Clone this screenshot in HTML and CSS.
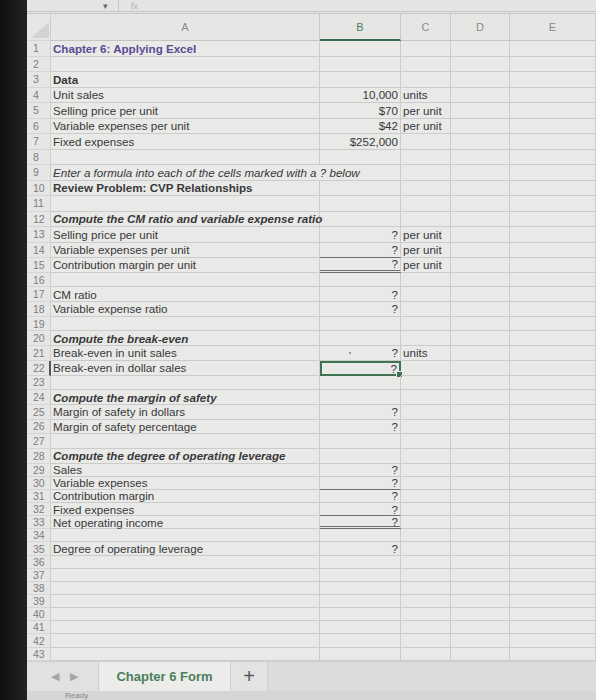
FILE: index.html
```
<!DOCTYPE html>
<html>
<head>
<meta charset="utf-8">
<link rel="stylesheet" href="styles.css">
</head>
<body>
<div class="screen">
  <div class="bezel"></div>
  <div class="app">
    <div class="fbar"><span class="caret">&#9662;</span><span class="fdiv"></span><span class="fx">fx</span></div>
    <div class="row head">
      <div class="rn corner"><span class="tri"></span></div>
      <div class="c a hc">A</div>
      <div class="c b hc selcol">B</div>
      <div class="c cc hc">C</div>
      <div class="c d hc">D</div>
      <div class="c e hc">E</div>
    </div>

    <div class="row h1"><div class="rn">1</div><div class="c a title">Chapter 6: Applying Excel</div><div class="c b"></div><div class="c cc"></div><div class="c d"></div><div class="c e"></div></div>
    <div class="row h1"><div class="rn">2</div><div class="c a"></div><div class="c b"></div><div class="c cc"></div><div class="c d"></div><div class="c e"></div></div>
    <div class="row h1"><div class="rn">3</div><div class="c a bold">Data</div><div class="c b"></div><div class="c cc"></div><div class="c d"></div><div class="c e"></div></div>
    <div class="row h1"><div class="rn">4</div><div class="c a">Unit sales</div><div class="c b num">10,000</div><div class="c cc">units</div><div class="c d"></div><div class="c e"></div></div>
    <div class="row h1"><div class="rn">5</div><div class="c a">Selling price per unit</div><div class="c b num">$70</div><div class="c cc">per unit</div><div class="c d"></div><div class="c e"></div></div>
    <div class="row h1"><div class="rn">6</div><div class="c a">Variable expenses per unit</div><div class="c b num">$42</div><div class="c cc">per unit</div><div class="c d"></div><div class="c e"></div></div>
    <div class="row h1"><div class="rn">7</div><div class="c a">Fixed expenses</div><div class="c b num">$252,000</div><div class="c cc"></div><div class="c d"></div><div class="c e"></div></div>
    <div class="row h1"><div class="rn">8</div><div class="c a"></div><div class="c b"></div><div class="c cc"></div><div class="c d"></div><div class="c e"></div></div>
    <div class="row h1"><div class="rn">9</div><div class="c a noright ital">Enter a formula into each of the cells marked with a ? below</div><div class="c b"></div><div class="c cc"></div><div class="c d"></div><div class="c e"></div></div>
    <div class="row h1"><div class="rn">10</div><div class="c a bold">Review Problem: CVP Relationships</div><div class="c b"></div><div class="c cc"></div><div class="c d"></div><div class="c e"></div></div>
    <div class="row h1"><div class="rn">11</div><div class="c a"></div><div class="c b"></div><div class="c cc"></div><div class="c d"></div><div class="c e"></div></div>
    <div class="row h1"><div class="rn">12</div><div class="c a bi">Compute the CM ratio and variable expense ratio</div><div class="c b"></div><div class="c cc"></div><div class="c d"></div><div class="c e"></div></div>
    <div class="row h1"><div class="rn">13</div><div class="c a">Selling price per unit</div><div class="c b num">?</div><div class="c cc">per unit</div><div class="c d"></div><div class="c e"></div></div>
    <div class="row h1"><div class="rn">14</div><div class="c a">Variable expenses per unit</div><div class="c b num ul">?</div><div class="c cc">per unit</div><div class="c d"></div><div class="c e"></div></div>

    <div class="row h2"><div class="rn">15</div><div class="c a">Contribution margin per unit</div><div class="c b num dul">?</div><div class="c cc">per unit</div><div class="c d"></div><div class="c e"></div></div>
    <div class="row h2"><div class="rn">16</div><div class="c a"></div><div class="c b"></div><div class="c cc"></div><div class="c d"></div><div class="c e"></div></div>
    <div class="row h2"><div class="rn">17</div><div class="c a">CM ratio</div><div class="c b num">?</div><div class="c cc"></div><div class="c d"></div><div class="c e"></div></div>
    <div class="row h2"><div class="rn">18</div><div class="c a">Variable expense ratio</div><div class="c b num">?</div><div class="c cc"></div><div class="c d"></div><div class="c e"></div></div>
    <div class="row h2"><div class="rn">19</div><div class="c a"></div><div class="c b"></div><div class="c cc"></div><div class="c d"></div><div class="c e"></div></div>
    <div class="row h2"><div class="rn">20</div><div class="c a bi">Compute the break-even</div><div class="c b"></div><div class="c cc"></div><div class="c d"></div><div class="c e"></div></div>
    <div class="row h2"><div class="rn">21</div><div class="c a">Break-even in unit sales</div><div class="c b num dot">?</div><div class="c cc">units</div><div class="c d"></div><div class="c e"></div></div>
    <div class="row h2"><div class="rn selrow">22</div><div class="c a">Break-even in dollar sales</div><div class="c b num sel">?<span class="handle"></span></div><div class="c cc"></div><div class="c d"></div><div class="c e"></div></div>
    <div class="row h2"><div class="rn">23</div><div class="c a"></div><div class="c b"></div><div class="c cc"></div><div class="c d"></div><div class="c e"></div></div>
    <div class="row h2"><div class="rn">24</div><div class="c a bi">Compute the margin of safety</div><div class="c b"></div><div class="c cc"></div><div class="c d"></div><div class="c e"></div></div>
    <div class="row h2"><div class="rn">25</div><div class="c a">Margin of safety in dollars</div><div class="c b num">?</div><div class="c cc"></div><div class="c d"></div><div class="c e"></div></div>
    <div class="row h2"><div class="rn">26</div><div class="c a">Margin of safety percentage</div><div class="c b num">?</div><div class="c cc"></div><div class="c d"></div><div class="c e"></div></div>
    <div class="row h2"><div class="rn">27</div><div class="c a"></div><div class="c b"></div><div class="c cc"></div><div class="c d"></div><div class="c e"></div></div>
    <div class="row h2"><div class="rn">28</div><div class="c a bi">Compute the degree of operating leverage</div><div class="c b"></div><div class="c cc"></div><div class="c d"></div><div class="c e"></div></div>

    <div class="row h3"><div class="rn">29</div><div class="c a">Sales</div><div class="c b num">?</div><div class="c cc"></div><div class="c d"></div><div class="c e"></div></div>
    <div class="row h3"><div class="rn">30</div><div class="c a">Variable expenses</div><div class="c b num ul">?</div><div class="c cc"></div><div class="c d"></div><div class="c e"></div></div>
    <div class="row h3"><div class="rn">31</div><div class="c a">Contribution margin</div><div class="c b num">?</div><div class="c cc"></div><div class="c d"></div><div class="c e"></div></div>
    <div class="row h3"><div class="rn">32</div><div class="c a">Fixed expenses</div><div class="c b num ul">?</div><div class="c cc"></div><div class="c d"></div><div class="c e"></div></div>
    <div class="row h3"><div class="rn">33</div><div class="c a">Net operating income</div><div class="c b num dul">?</div><div class="c cc"></div><div class="c d"></div><div class="c e"></div></div>
    <div class="row h3"><div class="rn">34</div><div class="c a"></div><div class="c b"></div><div class="c cc"></div><div class="c d"></div><div class="c e"></div></div>
    <div class="row h3"><div class="rn">35</div><div class="c a">Degree of operating leverage</div><div class="c b num">?</div><div class="c cc"></div><div class="c d"></div><div class="c e"></div></div>
    <div class="row h3"><div class="rn">36</div><div class="c a"></div><div class="c b"></div><div class="c cc"></div><div class="c d"></div><div class="c e"></div></div>
    <div class="row h3"><div class="rn">37</div><div class="c a"></div><div class="c b"></div><div class="c cc"></div><div class="c d"></div><div class="c e"></div></div>
    <div class="row h3"><div class="rn">38</div><div class="c a"></div><div class="c b"></div><div class="c cc"></div><div class="c d"></div><div class="c e"></div></div>
    <div class="row h3"><div class="rn">39</div><div class="c a"></div><div class="c b"></div><div class="c cc"></div><div class="c d"></div><div class="c e"></div></div>
    <div class="row h3"><div class="rn">40</div><div class="c a"></div><div class="c b"></div><div class="c cc"></div><div class="c d"></div><div class="c e"></div></div>
    <div class="row h3"><div class="rn">41</div><div class="c a"></div><div class="c b"></div><div class="c cc"></div><div class="c d"></div><div class="c e"></div></div>
    <div class="row h3"><div class="rn">42</div><div class="c a"></div><div class="c b"></div><div class="c cc"></div><div class="c d"></div><div class="c e"></div></div>
    <div class="row h3"><div class="rn">43</div><div class="c a"></div><div class="c b"></div><div class="c cc"></div><div class="c d"></div><div class="c e"></div></div>

    <div class="tabs">
      <div class="nav"><span class="arr">&#9664;</span><span class="arr">&#9654;</span></div>
      <div class="tab">Chapter 6 Form</div>
      <div class="plus">+</div>
      <div class="rest"></div>
    </div>
    <div class="status">Ready</div>
  </div>
</div>
</body>
</html>
```

FILE: styles.css
```
html, body {
  margin: 0;
  padding: 0;
  width: 596px;
  height: 700px;
  overflow: hidden;
  background: #1b1b1d;
}
.screen {
  display: flex;
  width: 596px;
  height: 700px;
  font-family: "Liberation Sans", Arial, sans-serif;
  color: #38383a;
}
.bezel {
  width: 27px;
  flex: none;
  background: linear-gradient(90deg, #0e0e10, #232326);
}
.app {
  flex: 1;
  display: flex;
  flex-direction: column;
  background: #e9e9e7;
  overflow: hidden;
}
.fbar {
  height: 11px;
  flex: none;
  background: #e4e4e2;
  border-bottom: 3px double #c6c6c4;
  display: flex;
  align-items: center;
  font-size: 9px;
  color: #9a9a9a;
}
.caret { margin-left: 76px; color: #666; font-size: 9px; }
.fdiv { width: 1px; height: 11px; background: #c4c4c2; margin-left: 10px; }
.fx { margin-left: 12px; color: #b0b0b0; }
.row {
  display: flex;
  flex: none;
  font-size: 11.6px;
  white-space: nowrap;
}
.head { height: 27px; background: #e6e6e4; }
.h1 { height: 15.5px; }
.h2 { height: 14.7px; }
.h3 { height: 13.15px; }
.rn {
  width: 24px;
  flex: none;
  box-sizing: border-box;
  border-right: 1px solid #cfcfcd;
  border-bottom: 1px solid #d6d6d4;
  color: #7d7d80;
  font-size: 10.5px;
  display: flex;
  align-items: center;
  padding-left: 6px;
  background: #e6e6e4;
}
.tri {
  width: 0; height: 0;
  border-left: 18px solid transparent;
  border-bottom: 16px solid #d2d2d0;
  margin-left: -2px;
  margin-top: 6px;
}
.selrow { border-right: 2px solid #555; }
.c {
  box-sizing: border-box;
  border-right: 1px solid #cbcbc9;
  border-bottom: 1px solid #cbcbc9;
  display: flex;
  align-items: center;
  padding: 0 2px;
  overflow: visible;
  position: relative;
  flex: none;
}
.a { width: 269px; }
.b { width: 81px; }
.cc { width: 50px; }
.d { width: 59px; }
.e { flex: 1; }
.hc {
  justify-content: center;
  color: #8a8a8c;
  font-size: 11px;
  border-bottom: 1px solid #c4c4c2;
}
.selcol { border-bottom: 2px solid #3d6b4f; color: #4e7d5e; }
.title { color: #5a4b95; font-weight: bold; }
.bold { font-weight: bold; }
.ital { font-style: italic; }
.bi { font-weight: bold; font-style: italic; }
.noright { border-right-color: transparent; }
.num { justify-content: flex-end; }
.ul { border-bottom: 1px solid #6d6d70; }
.dul { border-bottom: 3px double #6d6d70; }
.dot::before {
  content: "";
  position: absolute;
  left: 29px;
  top: 6px;
  width: 2px;
  height: 2px;
  background: #9a9a9a;
}
.sel { border: 2px solid #3f7452; }
.handle {
  position: absolute;
  right: -4px;
  bottom: -4px;
  width: 5px;
  height: 5px;
  background: #3f7452;
  border: 1px solid #e9e9e7;
}
.tabs {
  height: 29px;
  flex: none;
  display: flex;
  background: #dcdcda;
  border-top: 1px solid #cfcfcd;
}
.nav {
  width: 72px;
  display: flex;
  align-items: center;
  gap: 11px;
  padding-left: 24px;
  box-sizing: border-box;
  color: #a5a5a7;
  font-size: 11px;
  background: #e1e1df;
  border-right: 1px solid #cfcfcd;
}
.tab {
  width: 132px;
  display: flex;
  align-items: center;
  justify-content: center;
  font-weight: bold;
  font-size: 13px;
  color: #4b7f5c;
  background: #ececea;
  box-sizing: border-box;
  border-right: 1px solid #d2d2d0;
}
.plus {
  width: 36px;
  display: flex;
  align-items: center;
  justify-content: center;
  font-size: 20px;
  color: #555;
  background: #e3e3e1;
  border-right: 1px solid #cfcfcd;
}
.rest { flex: 1; background: #dedcda; }
.status {
  flex: 1;
  background: #d6d6d4;
  font-size: 8px;
  line-height: 9px;
  color: #8a8a8a;
  padding-left: 38px;
}
```
